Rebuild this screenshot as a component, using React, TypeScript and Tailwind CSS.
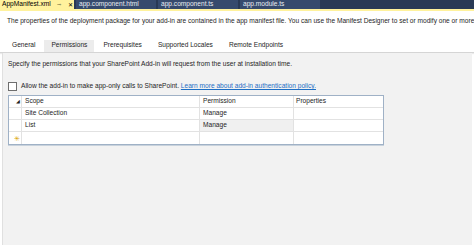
import { useState } from "react";

const docTabs = ["app.component.html", "app.component.ts", "app.module.ts"];
const pageTabs = ["General", "Permissions", "Prerequisites", "Supported Locales", "Remote Endpoints"];

export default function App() {
  const [tab, setTab] = useState("Permissions");
  const [appOnly, setAppOnly] = useState(false);

  return (
    <div
      className="w-[474px] h-[245px] bg-white overflow-hidden text-[#1e1e1e] text-[6.6px] leading-none"
      style={{ fontFamily: '"Liberation Sans", Arial, sans-serif' }}
    >
      {/* document tab well */}
      <div className="flex h-[9px] bg-[#293955]">
        <div className="flex items-center w-[74px] bg-[#fff29d] pl-[2px] text-black">
          <span>AppManifest.xml</span>
          <span className="ml-[6px] text-[5px] text-[#6b6b40]">⊸</span>
          <span className="ml-[7px] text-[6px]">✕</span>
        </div>
        {docTabs.map((t) => (
          <div
            key={t}
            className="flex items-center w-[80px] ml-[2px] bg-[#364a6d] pl-[3px] text-[#e8ecf2]"
          >
            {t}
          </div>
        ))}
      </div>
      <div className="h-[2px] bg-[#fff29d]" />

      <p className="mt-[7px] pl-[7px] whitespace-nowrap">
        The properties of the deployment package for your add-in are contained in the app manifest file. You can use the
        Manifest Designer to set or modify one or more
      </p>

      {/* designer tabs */}
      <div className="mt-[15px] flex h-[13px] border-b border-[#d5d5d5] shadow-[0_1px_1px_rgba(0,0,0,0.08)]">
        {pageTabs.map((t, i) => (
          <button
            key={t}
            onClick={() => setTab(t)}
            className={
              "flex items-center h-full px-[7px] " +
              (i === 0 ? "ml-[5px] " : "ml-[2px] ") +
              (tab === t ? "bg-[#ececec]" : "")
            }
          >
            {t}
          </button>
        ))}
      </div>

      {/* permissions page */}
      <div className="mx-[2px] h-[192px] bg-[#f2f2f2] border-l border-[#e0e0e0] px-[5px] pt-[8px]">
        <p className="whitespace-nowrap">
          Specify the permissions that your SharePoint Add-in will request from the user at installation time.
        </p>

        <label className="mt-[15px] flex items-center gap-[4px]">
          <span
            onClick={() => setAppOnly(!appOnly)}
            className="w-[9px] h-[9px] border border-[#6e6e6e] bg-white flex items-center justify-center text-[6px]"
          >
            {appOnly ? "✓" : ""}
          </span>
          <span className="whitespace-nowrap">
            Allow the add-in to make app-only calls to SharePoint.{" "}
            <span className="text-[#1e6fc5] underline">Learn more about add-in authentication policy.</span>
          </span>
        </label>

        <div className="mt-[4px] w-[376px] border border-[#9fb1c6] bg-white shadow-[0_1px_0_#c8d2dc]">
          <Row sel={<span className="text-[5px]">◢</span>} a="Scope" b="Permission" c="Properties" />
          <Row a="Site Collection" b="Manage" />
          <Row a="List" b="Manage" shade />
          <Row sel={<span className="text-[#d9a400] text-[7px]">✳</span>} last />
        </div>
      </div>
    </div>
  );
}

function Row({
  a = "",
  b = "",
  c = "",
  sel,
  shade,
  last,
}: {
  a?: string;
  b?: string;
  c?: string;
  sel?: React.ReactNode;
  shade?: boolean;
  last?: boolean;
}) {
  return (
    <div className={"flex h-[12px] " + (last ? "" : "border-b border-[#e2e2e2]")}>
      <div className="w-[13px] flex items-center justify-end pr-[1px] border-r border-[#e2e2e2]">{sel}</div>
      <div className="w-[177px] flex items-center pl-[3px]">{a}</div>
      <div
        className={
          "w-[94px] flex items-center pl-[3px] border-l border-[#e2e2e2] " + (shade ? "bg-[#f0f0f0]" : "")
        }
      >
        {b}
      </div>
      <div className="flex-1 flex items-center pl-[2px] border-l border-[#e2e2e2]">{c}</div>
    </div>
  );
}
